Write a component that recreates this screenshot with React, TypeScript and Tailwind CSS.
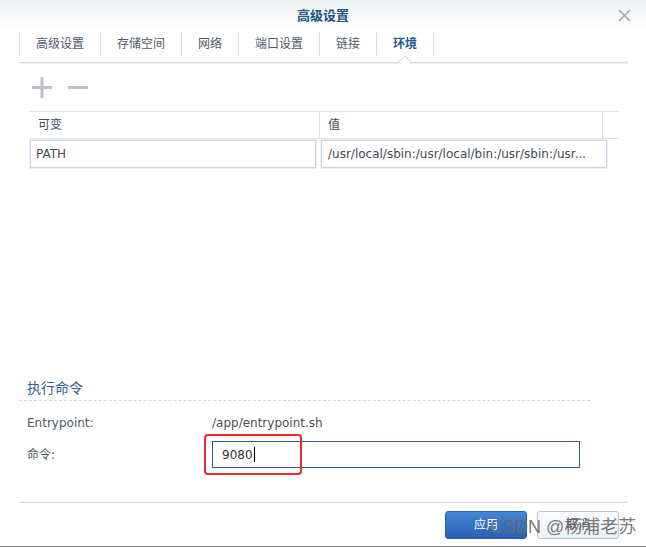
import React from "react";

const tabs = ["高级设置", "存储空间", "网络", "端口设置", "链接", "环境"];

export default function App() {
  return (
    <div
      className="relative w-[646px] h-[547px] bg-white overflow-hidden text-[12px] text-[#4a5663]"
      style={{ fontFamily: '"DejaVu Sans", "Noto Sans CJK SC", sans-serif' }}
    >
      {/* Title bar */}
      <div className="relative h-[32px] flex items-center justify-center bg-gradient-to-b from-[#eef1f5] to-[#ffffff]">
        <span className="text-[13px] font-bold text-[#21508a]">高级设置</span>
        <button className="absolute right-[15px] top-[9px] w-[13px] h-[13px] flex items-center justify-center">
          <svg width="13" height="13" viewBox="0 0 13 13">
            <path d="M1 1L12 12M12 1L1 12" stroke="#a3a8ae" strokeWidth="1.6" />
          </svg>
        </button>
      </div>

      {/* Tabs */}
      <div className="ml-[19px] mr-[18px] h-[31px] border-b border-[#d5d9de] shadow-[0_1px_1px_rgba(0,0,0,0.06)] flex items-start">
        {tabs.map((t, i) => {
          const active = i === tabs.length - 1;
          return (
            <div
              key={t}
              className={`relative h-[24px] px-4 flex items-center border-l border-[#d6dee8] text-[12px] ${
                active ? "border-r text-[#1e5896] font-bold" : "text-[#4d5b6a]"
              }`}
            >
              {t}
              {active && (
                <span className="absolute left-1/2 -translate-x-1/2 top-[25px] w-[9px] h-[9px] rotate-45 bg-white border-l border-t border-[#d5d9de]" />
              )}
            </div>
          );
        })}
      </div>

      {/* Toolbar */}
      <div className="h-[48px] flex items-center gap-[16px] pl-[32px]">
        <svg width="20" height="21" viewBox="0 0 20 21">
          <path d="M0 10.5H20M10 0V21" stroke="#bcc1c7" strokeWidth="3" />
        </svg>
        <svg width="20" height="21" viewBox="0 0 20 21">
          <path d="M0 10.5H20" stroke="#bcc1c7" strokeWidth="3" />
        </svg>
      </div>

      {/* Table */}
      <div className="ml-[29px] w-[590px]">
        <div className="flex h-[28px] border-t border-b border-[#dbe3eb]">
          <div className="w-[290px] flex items-center pl-[9px] text-[#3c4d60]">可变</div>
          <div className="w-[283px] flex items-center pl-[8px] border-l border-[#dbe3eb] text-[#3c4d60]">值</div>
          <div className="flex-1 border-l border-[#dbe3eb]" />
        </div>
        <div className="flex h-[29px] pt-[1px]">
          <div className="ml-[1px] w-[286px] h-[28px] border border-[#c9d5e2] shadow-[0_0_0_1px_#e9f0f8] flex items-center pl-[5px] text-[#3d4a58]">
            PATH
          </div>
          <div className="ml-[5px] w-[286px] h-[28px] border border-[#c9d5e2] shadow-[0_0_0_1px_#e9f0f8] flex items-center pl-[6px] text-[#3d4a58] whitespace-nowrap overflow-hidden">
            /usr/local/sbin:/usr/local/bin:/usr/sbin:/usr...
          </div>
        </div>
      </div>

      {/* Execute command section */}
      <div className="mt-[209px] ml-[19px] w-[571px] h-[24px] border-b border-dashed border-[#cfd8e2] flex items-center pl-[8px]">
        <span className="text-[14px] text-[#2d5f98]">执行命令</span>
      </div>
      <div className="mt-[12px] ml-[27px] h-[20px] flex items-center">
        <div className="w-[185px] text-[#4f5963]">Entrypoint:</div>
        <div className="text-[#4b4f54]">/app/entrypoint.sh</div>
      </div>
      <div className="relative mt-[8px] ml-[27px] h-[27px] flex items-center">
        <div className="w-[185px] text-[#4f5963]">命令:</div>
        <div className="w-[368px] h-[27px] border border-[#2f5d92] flex items-center pl-[9px] text-[#333]">
          9080<span className="ml-[1px] w-[1px] h-[15px] bg-black" />
        </div>
        <div className="absolute left-[177px] top-[-7px] w-[98px] h-[41px] border-2 border-[#ea2a2e] rounded-[4px]" />
      </div>

      {/* Footer */}
      <div className="mt-[34px] ml-[19px] mr-[18px] border-t border-[#dadada] shadow-[0_-1px_1px_rgba(0,0,0,0.04)] pt-[8px] flex justify-end gap-[10px] pr-[9px]">
        <button className="w-[82px] h-[28px] rounded-[3px] border border-[#2a5ea6] bg-gradient-to-b from-[#4486d4] to-[#2861b3] text-white text-[12px]">
          应用
        </button>
        <button className="w-[82px] h-[28px] rounded-[3px] border border-[#b9c6d4] bg-gradient-to-b from-[#fbfcfd] to-[#eaf0f6] text-[#3b4a5a] text-[12px]">
          取消
        </button>
      </div>
      <div className="absolute left-0 right-0 bottom-0 h-[1px] bg-[#8c8c8c]" />

      {/* Watermark */}
      <div
        className="absolute left-[490px] top-[514px] text-[18px] leading-[26px] text-[rgba(105,105,105,0.9)] whitespace-nowrap"
        style={{ fontFamily: '"Liberation Sans", "Noto Sans CJK SC", sans-serif' }}
      >
        CSDN @杨浦老苏
      </div>
    </div>
  );
}
